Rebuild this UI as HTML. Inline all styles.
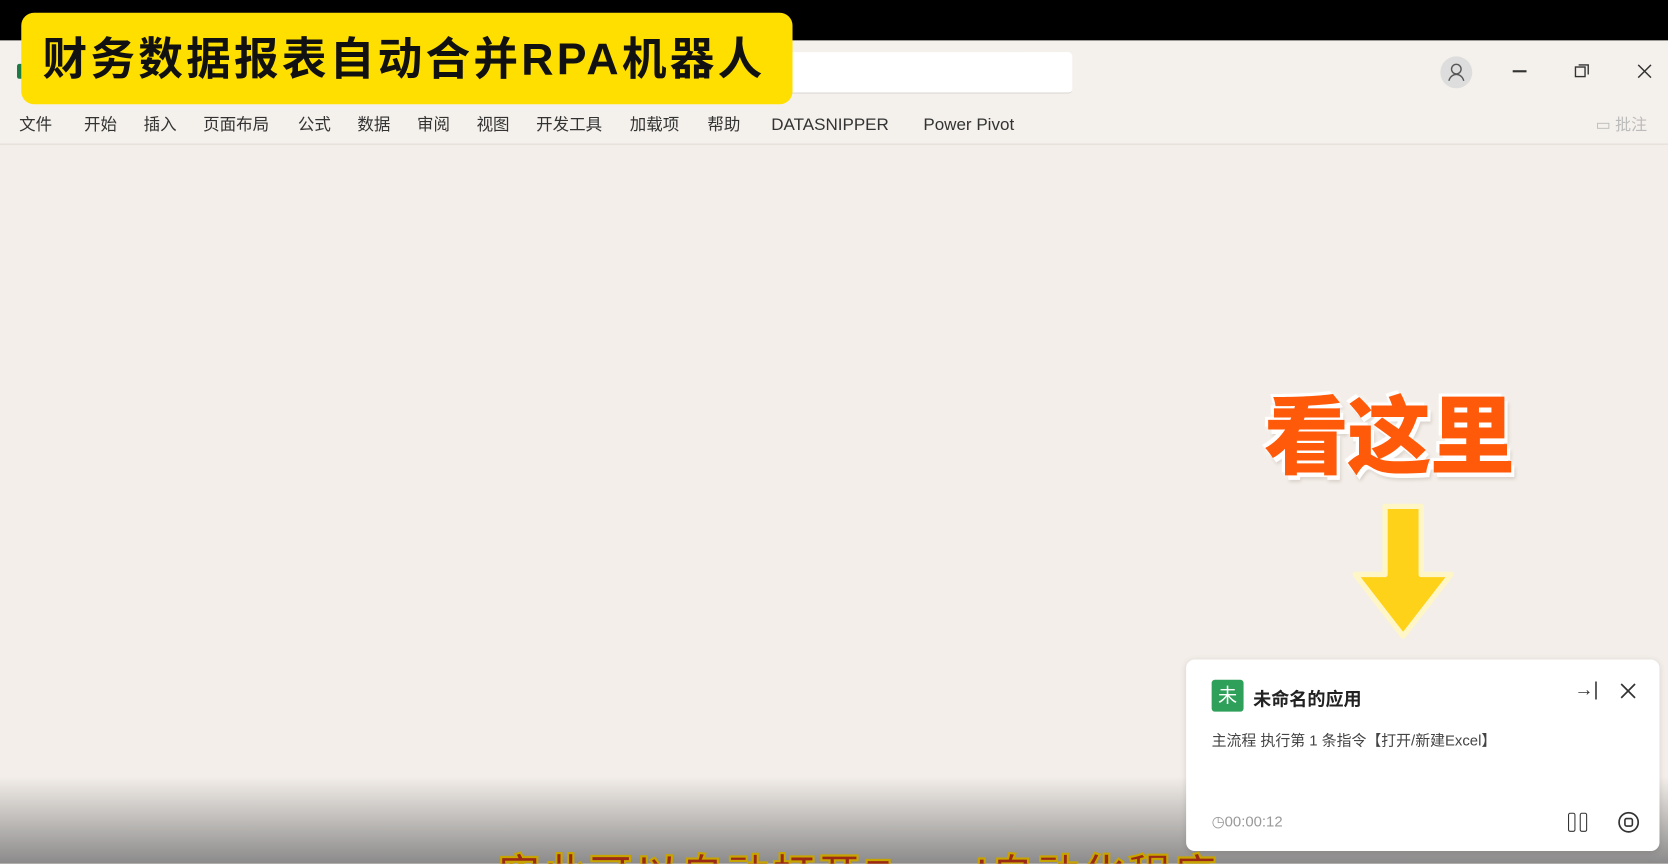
<!DOCTYPE html>
<html style="overflow:hidden"><head><meta charset="utf-8"><style>
html,body{margin:0;padding:0;width:1668px;height:864px;overflow:hidden;background:#f1ece7}
#w{position:absolute;left:0;top:0;width:1568px;height:812px;overflow:hidden;transform:scale(1.06378);transform-origin:0 0;font-family:"Liberation Sans","Noto Sans CJK SC",sans-serif;background:#f3eee9}
.abs{position:absolute}
.menu span{position:absolute;top:108px;font-size:15.5px;line-height:20px;color:#333}
</style></head><body><div id="w">
<div class="abs" style="left:0;top:0;width:1568px;height:38px;background:#000"></div>
<div class="abs" style="left:0;top:38px;width:1568px;height:97px;background:#f4f0ec;border-bottom:1px solid #e2ddd8"></div>
<div class="abs" style="left:16px;top:60px;width:10px;height:14px;background:#1e7a45;border-radius:2px"></div>
<div class="abs" style="left:700px;top:49px;width:308px;height:38px;background:#fff;border-radius:4px;border-bottom:1px solid #d8d4d0"></div>
<div class="abs" style="left:20px;top:12px;width:725px;height:86px;background:#ffdf00;border-radius:12px"></div>
<div class="abs" style="left:40px;top:26px;font-size:42px;font-weight:bold;color:#111;line-height:60px;letter-spacing:3px;white-space:nowrap">财务数据报表自动合并RPA机器人</div>
<div class="abs" style="left:1354px;top:53px;width:30px;height:30px;border-radius:50%;background:#ddd"></div>
<svg class="abs" style="left:1354px;top:53px" width="30" height="30"><circle cx="15" cy="12" r="4.5" fill="none" stroke="#555" stroke-width="1.3"/><path d="M8 23c1-4 4-6 7-6s6 2 7 6" fill="none" stroke="#555" stroke-width="1.3"/></svg>
<div class="abs" style="left:1422px;top:66px;width:13px;height:1.5px;background:#333"></div>
<svg class="abs" style="left:1480px;top:60px" width="14" height="14"><rect x="1" y="3" width="9" height="9" fill="none" stroke="#333" stroke-width="1.3"/><path d="M4 1h9v9" fill="none" stroke="#333" stroke-width="1.3"/></svg>
<svg class="abs" style="left:1539px;top:60px" width="14" height="14"><path d="M1 1l12 12M13 1L1 13" stroke="#333" stroke-width="1.4"/></svg>
<div class="menu">
<span style="left:18px">文件</span><span style="left:79px">开始</span><span style="left:135px">插入</span><span style="left:191px">页面布局</span><span style="left:280px">公式</span><span style="left:336px">数据</span><span style="left:392px">审阅</span><span style="left:448px">视图</span><span style="left:504px">开发工具</span><span style="left:592px">加载项</span><span style="left:665px">帮助</span><span style="left:725px;font-size:16px">DATASNIPPER</span><span style="left:868px;font-size:16px">Power Pivot</span>
<span style="left:1500px;color:#bbb;font-size:15px">▭ 批注</span>
</div>
<div class="abs" style="left:0;top:730px;width:1568px;height:82px;background:linear-gradient(#f3eee900,#8b8a8a)"></div>
<div class="abs" style="left:1188px;top:362px;font-size:80px;line-height:100px;font-weight:900;color:#ff5a0a;text-shadow:0 0 6px #fff,3px 4px 0 #fff,-3px -3px 0 #fff,4px 6px 3px #d8cfc8;letter-spacing:-2px">看这里</div>
<svg class="abs" style="left:1270px;top:470px" width="100" height="135"><path d="M32 6h34v64h28L49 128 4 70h28z" fill="#ffd21a" stroke="#fff6c8" stroke-width="5" stroke-linejoin="round"/></svg>
<div class="abs" style="left:1115px;top:620px;width:445px;height:180px;background:#fff;border-radius:8px;box-shadow:0 1px 6px rgba(0,0,0,.12)"></div>
<div class="abs" style="left:1139px;top:639px;width:30px;height:30px;background:#2ea05a;border-radius:3px;color:#fff;font-size:18px;text-align:center;line-height:30px">未</div>
<div class="abs" style="left:1178px;top:643px;font-size:17px;font-weight:bold;color:#222">未命名的应用</div>
<div class="abs" style="left:1480px;top:638px;font-size:18px;color:#333">→|</div>
<svg class="abs" style="left:1523px;top:642px" width="15" height="15"><path d="M1 1l13 13M14 1L1 14" stroke="#333" stroke-width="1.6"/></svg>
<div class="abs" style="left:1139px;top:686px;font-size:14px;color:#444">主流程 执行第 1 条指令【打开/新建Excel】</div>
<div class="abs" style="left:1139px;top:764px;font-size:14px;color:#999">◷00:00:12</div>
<div class="abs" style="left:1474px;top:764px;width:5px;height:16px;border:1.5px solid #333;border-radius:2px"></div>
<div class="abs" style="left:1485px;top:764px;width:5px;height:16px;border:1.5px solid #333;border-radius:2px"></div>
<svg class="abs" style="left:1520px;top:762px" width="22" height="22"><circle cx="11" cy="11" r="9" fill="none" stroke="#333" stroke-width="1.6"/><rect x="7.5" y="7.5" width="7" height="7" rx="1.5" fill="none" stroke="#333" stroke-width="1.5"/></svg>
<div class="abs" style="left:468px;top:798px;font-size:40px;font-weight:bold;color:#9a2a16;-webkit-text-stroke:2px #c8a400;line-height:50px;letter-spacing:3px;white-space:nowrap">实此可以自动打开Excel自动化程序</div>
</div></body></html>
